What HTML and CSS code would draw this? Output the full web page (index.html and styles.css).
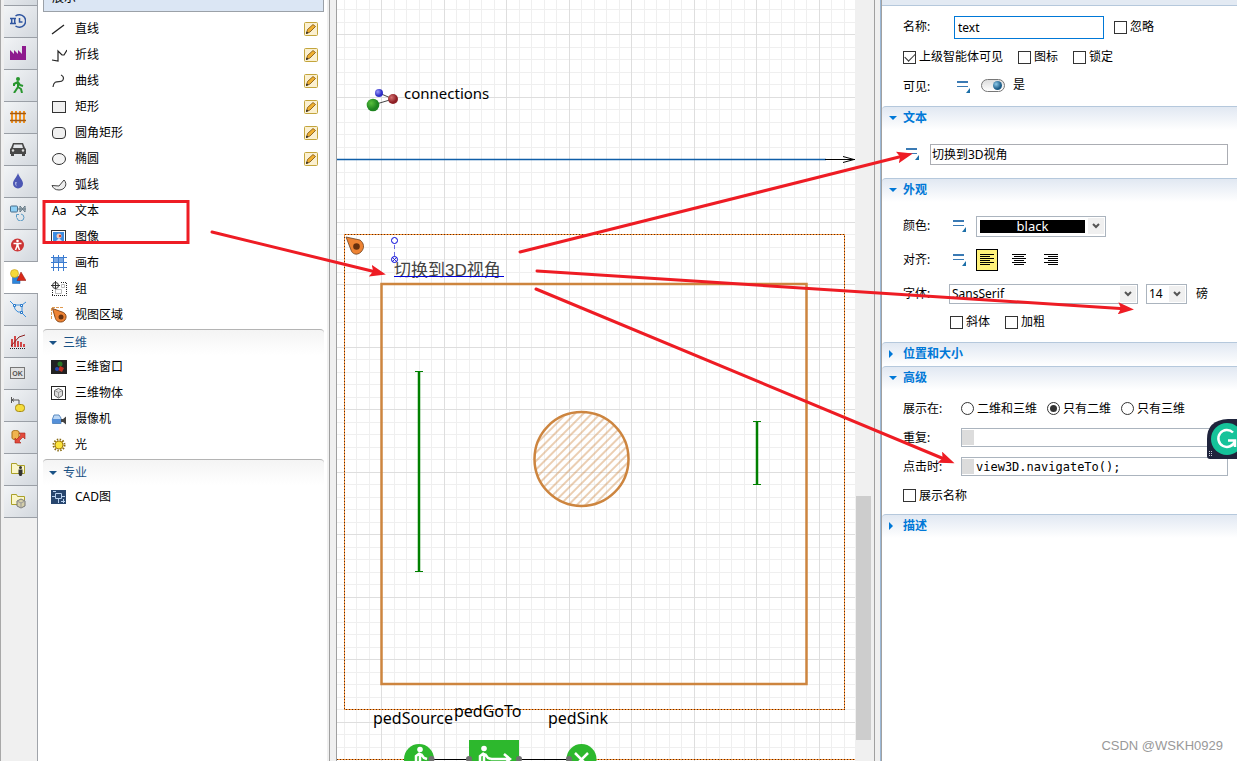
FILE: index.html
```html
<!DOCTYPE html>
<html lang="zh-CN">
<head>
    <meta charset="UTF-8">
    <meta name="viewport" content="width=device-width, initial-scale=1.0">
    <title>展示</title>
    <link rel="stylesheet" href="styles.css">
</head>
<body>
    <!-- Palette tabs -->
    <nav class="rail">
        <button type="button" class="tab tab-first" aria-label="智能体"></button>
        <button type="button" class="tab" aria-label="流程"><svg class="icon" viewBox="0 0 16 16"><g fill="none" stroke="#2f55a0" stroke-width="1.5"><path d="M5.500 3A6.300 6.300 0 1 1 5.500 13"/><path d="M0 5.500h6M0 10.500h6M1.700 5.500v5M4.700 5.500v5M9.500 5v4h3"/></g></svg></button>
        <button type="button" class="tab" aria-label="工业"><svg class="icon" viewBox="0 0 16 16"><path fill="#8e1b8e" d="M0 15V5l4 4V5l4 4V5l4 4V1h4v14z"/></svg></button>
        <button type="button" class="tab" aria-label="行人"><svg class="icon" viewBox="0 0 16 16"><circle cx="8" cy="2" r="2" fill="#28962e"/><path fill="none" stroke="#28962e" stroke-width="2" stroke-linejoin="round" d="M8 5v5l3 2 1 4M8 10l-2 3-2 3M4 9V7l4-2 2 3 3 1"/></svg></button>
        <button type="button" class="tab" aria-label="轨道"><svg class="icon" viewBox="0 0 16 16"><path stroke="#f0921e" stroke-width="2" d="M2 2v12M6 2v12M10 2v12M14 2v12"/><path stroke="#a35a12" stroke-width="1.5" d="M0 4.500h16M0 11.500h16"/></svg></button>
        <button type="button" class="tab" aria-label="道路"><svg class="icon" viewBox="0 0 16 16"><path fill="#484848" d="M3 2h10l2 5 1 1v5h-1v2h-3v-2H4v2H1v-2H0V8l1-1z"/><path fill="#e3e6ea" d="M4 3.500h8l1 3.500H3z"/><circle cx="3" cy="9.500" r="1.200" fill="#ddd"/><circle cx="13" cy="9.500" r="1.200" fill="#ddd"/></svg></button>
        <button type="button" class="tab" aria-label="流体"><svg class="icon" viewBox="0 0 16 16"><path fill="#4c57b4" d="M8 0c1 4 5 7 5 10.500a5 5 0 0 1-10 0C3 7 7 4 8 0z"/><path fill="#a9b0e2" d="M5 9c-.5 2 .5 4 2 4.500C6 12 6 10.500 7 9z"/></svg></button>
        <button type="button" class="tab" aria-label="系统动力学"><svg class="icon" viewBox="0 0 16 16"><rect x=".5" y="1" width="7" height="6" rx="1" fill="#8fd0f5" stroke="#4a6f8c"/><path fill="none" stroke="#5f7481" d="M7 4h9M10 1l5 6M15 1l-5 6M10 1v6M15 1v6"/><path fill="none" stroke="#5a9ac4" d="M9 9.500H6.500v3M11 9a3.500 3.500 0 1 1-4 4"/></svg></button>
        <button type="button" class="tab" aria-label="智能体"><svg class="icon" viewBox="0 0 16 16"><circle cx="7.500" cy="8" r="6.500" fill="#cc3535"/><circle cx="7.500" cy="4" r="1.300" fill="#fff"/><path fill="none" stroke="#fff" stroke-width="1.500" d="M3.500 6.500h8M7 6v3l-1.500 4M8 6v3l1.500 4"/></svg></button>
        <button type="button" class="tab active" aria-label="展示"><svg class="icon" viewBox="0 0 16 16"><path fill="#2c87dc" stroke="#1c5aa8" stroke-width=".5" d="M2.500 7.500H10v7H2.500z"/><circle cx="4.500" cy="4.500" r="4" fill="#f5d93a" stroke="#c79c17" stroke-width=".6"/><path fill="#d92818" stroke="#8c1810" stroke-width=".5" d="M11 3l5 8.500H7z"/></svg></button>
        <button type="button" class="tab" aria-label="空间标记"><svg class="icon" viewBox="0 0 16 16"><g fill="none" stroke="#3c8fdc"><path d="M0 0l4 4M16 1l-4 3M16 16l-5-5M4 4h8v7H8Q4 9 4 4"/></g><path fill="#fff" stroke="#2878c8" d="M3.500 3.500h2v2h-2zM10.500 3.500h2v2h-2zM10.500 10.500h2v2h-2z"/></svg></button>
        <button type="button" class="tab" aria-label="分析"><svg class="icon" viewBox="0 0 16 16"><path stroke="#d04848" stroke-width="2" d="M2 6v8M5 3v11M8 8v6M11 9v5M14 11v3"/><path fill="none" stroke="#8c2020" d="M1 13L9 4l6-2"/><path stroke="#222" stroke-dasharray="1 1" d="M0 15.500h15"/></svg></button>
        <button type="button" class="tab" aria-label="控件"><svg class="icon" viewBox="0 0 16 16"><rect x=".5" y="2.500" width="14" height="11" fill="#e2e2e2" stroke="#777"/><text x="7.500" y="11" class="ok-text">OK</text></svg></button>
        <button type="button" class="tab" aria-label="状态图"><svg class="icon" viewBox="0 0 16 16"><path fill="none" stroke="#555" d="M1.500 0v6M2 3h7v4M2 3l2-1.500M2 3l2 1.500"/><rect x="5.500" y="7.500" width="9" height="7" rx="3" fill="#f5dc3c" stroke="#a68b14"/></svg></button>
        <button type="button" class="tab" aria-label="行动图"><svg class="icon" viewBox="0 0 16 16"><path fill="#f0b450" stroke="#a56c14" d="M2 3c0-2 7-2 7 0v6c0 2-7 2-7 0z"/><path fill="#e34a3c" stroke="#a82418" stroke-width=".6" d="M15 4v6l-2-2-4 4 2 2H5V9l1.500 1.500L11 6 9 4z"/></svg></button>
        <button type="button" class="tab" aria-label="图片"><svg class="icon" viewBox="0 0 16 16"><path fill="#faf6c8" stroke="#aaa028" d="M1.500 2.500h5l1 2h7v8h-13z"/><circle cx="10.500" cy="6.500" r="1.500" fill="#333"/><path fill="#333" d="M8.500 8.500h4v4l-1 2.500h-2l-1-2.500z"/></svg></button>
        <button type="button" class="tab" aria-label="三维物体"><svg class="icon" viewBox="0 0 16 16"><path fill="#faf6c8" stroke="#aaa028" d="M1.500 1.500h5l1 2h7v8h-13z"/><path fill="#d4ceaa" stroke="#777" d="M11 6l4 2v5l-4 2-4-2V8z"/><path fill="none" stroke="#999" d="M7 8l4 2 4-2M11 10v5"/></svg></button>
    </nav>

    <!-- Palette -->
    <aside class="palette">
        <button type="button" class="palette-head"><span>展示</span><svg class="head-pins" viewBox="0 0 32 8"><path fill="#6b6459" d="M0 0h4v5H0zM6 0h4v5H6zM20 0h3v5h-3zM27 0h3v5h-3z"/></svg></button>
        <div class="items">
            <button type="button" class="item"><svg class="icon" viewBox="0 0 16 16"><path stroke="#222" stroke-width="1.300" d="M1 13L13 4"/></svg>直线<svg class="pencil"><use href="#pencil"/></svg></button>
            <button type="button" class="item"><svg class="icon" viewBox="0 0 16 16"><path fill="none" stroke="#222" stroke-width="1.200" d="M1 13l6 1V4l4 4h2l3-5"/></svg>折线<svg class="pencil"><use href="#pencil"/></svg></button>
            <button type="button" class="item"><svg class="icon" viewBox="0 0 16 16"><path fill="none" stroke="#333" stroke-width="1.200" d="M2 14c1-9 8-3 10-7 1-2 0-4-2-5"/></svg>曲线<svg class="pencil"><use href="#pencil"/></svg></button>
            <button type="button" class="item"><svg class="icon" viewBox="0 0 16 16"><rect x="1.500" y="2.500" width="13" height="11" fill="#f0f0f0" stroke="#333"/></svg>矩形<svg class="pencil"><use href="#pencil"/></svg></button>
            <button type="button" class="item"><svg class="icon" viewBox="0 0 16 16"><rect x="1.500" y="2.500" width="13" height="11" rx="3.500" fill="#f0f0f0" stroke="#333"/></svg>圆角矩形<svg class="pencil"><use href="#pencil"/></svg></button>
            <button type="button" class="item"><svg class="icon" viewBox="0 0 16 16"><ellipse cx="8" cy="8" rx="6.500" ry="5.500" fill="#f4f4f4" stroke="#333"/></svg>椭圆<svg class="pencil"><use href="#pencil"/></svg></button>
            <button type="button" class="item"><svg class="icon" viewBox="0 0 16 16"><path fill="#eee" stroke="#444" d="M1 8.500l7 .5 5-6c4 4 1 10-5 10-4 0-6-2-7-4.500z"/></svg>弧线</button>
            <button type="button" class="item"><svg class="icon" viewBox="0 0 16 16"><text x="1" y="12" class="aa-text">Aa</text></svg>文本</button>
            <button type="button" class="item"><svg class="icon" viewBox="0 0 16 16"><rect x=".5" y="1.500" width="14" height="12" fill="#fff" stroke="#333"/><path fill="#3c8ce0" d="M2 3h11v9H2z"/><circle cx="8" cy="7" r="2.500" fill="#f5c8b4"/><circle cx="9" cy="7" r="1.200" fill="#d04030"/><path fill="#cfe4fa" d="M5 12l3-3 3 3z"/></svg>图像</button>
            <button type="button" class="item"><svg class="icon" viewBox="0 0 16 16"><path fill="#79a8e4" d="M3 3h10v5H3z"/><path stroke="#3c7cd0" d="M0 2.500h16M0 7.500h16M0 12.500h16M2.500 0v16M7.500 0v16M12.500 0v16"/></svg>画布</button>
            <button type="button" class="item"><svg class="icon" viewBox="0 0 16 16"><path fill="none" stroke="#222" stroke-dasharray="1 1" d="M1 14.500h14.500V1.500H9M1.500 9v6"/><circle cx="4.500" cy="4.500" r="3" fill="none" stroke="#333"/><path fill="none" stroke="#333" d="M0 4.500h9M4.500 0v9"/><path fill="none" stroke="#bbb" d="M10.500 3.500h3v3h-3zM4.500 8.500h6v4h-6z"/></svg>组</button>
            <button type="button" class="item"><svg class="icon" viewBox="0 0 16 16"><path stroke="#e09a50" stroke-dasharray="3 1" fill="none" d="M12 .5H.5V13"/><path fill="#ee8333" stroke="#8a4a1a" d="M1.500 1.500l11 4c5 3 2 10-3 9.500-4 0-5-3-5.500-5z"/><circle cx="10" cy="10" r="2.500" fill="#66300e"/></svg>视图区域</button>
        </div>
        <button type="button" class="group-head"><i class="tri-down"></i>三维</button>
        <div class="items">
            <button type="button" class="item"><svg class="icon" viewBox="0 0 16 16"><path fill="#222" d="M0 1h16v14H0z"/><circle cx="9" cy="5" r="2.500" fill="#287828"/><path fill="#c03020" d="M9 7l4 2-2 4-4-2z"/><circle cx="6" cy="10" r="2" fill="#2848b0"/></svg>三维窗口</button>
            <button type="button" class="item"><svg class="icon" viewBox="0 0 16 16"><rect x=".5" y="1.500" width="14" height="13" fill="#fff" stroke="#222"/><path fill="#ddd" stroke="#666" d="M7.500 3.500l4 2v5l-4 2.500-4-2.500v-5z"/><path fill="none" stroke="#999" d="M3.500 5.500l4 2 4-2M7.500 7.500V13"/></svg>三维物体</button>
            <button type="button" class="item"><svg class="icon" viewBox="0 0 16 16"><path fill="#bcd7f5" stroke="#5b8bc0" d="M3 4h5l2 3v5.500H1.500q-1-4 1.500-8.500z"/><path fill="#5590d8" d="M1 8h9v4H1z"/><path fill="#444" d="M10 8h2l3-2.500v8L12 11h-2z"/></svg>摄像机</button>
            <button type="button" class="item"><svg class="icon" viewBox="0 0 16 16"><circle cx="8" cy="8" r="5.500" fill="none" stroke="#8a6c10" stroke-width="2" stroke-dasharray="1.440 1.440"/><circle cx="8" cy="8" r="4" fill="#fbe43c" stroke="#a37c10"/></svg>光</button>
        </div>
        <button type="button" class="group-head"><i class="tri-down"></i>专业</button>
        <div class="items">
            <button type="button" class="item"><svg class="icon" viewBox="0 0 16 16"><path fill="#28466e" d="M0 1h15v14H0z"/><path fill="none" stroke="#b8d0ee" d="M4.500 4.500h6v5h-6zM1 7.500h3M11 7.500h3M7.500 10v4M2 2.500h3M10 12.500h4M12.500 10v4"/></svg>CAD图</button>
        </div>
    </aside>

    <div class="splitter"></div>

    <!-- Graphical editor -->
    <main class="editor">
        <svg class="canvas">
            <defs>
                <pattern id="hatch" width="6" height="6" patternUnits="userSpaceOnUse" patternTransform="rotate(45)">
                    <path stroke="#cd853f" stroke-width=".8" d="M3 0v6"/>
                </pattern>
                <radialGradient id="redBall" cx=".35" cy=".35"><stop offset="0" stop-color="#d67070"/><stop offset="1" stop-color="#8e2026"/></radialGradient>
                <radialGradient id="greenBall" cx=".35" cy=".35"><stop offset="0" stop-color="#58c03c"/><stop offset="1" stop-color="#1e8420"/></radialGradient>
                <radialGradient id="blueBall" cx=".35" cy=".35"><stop offset="0" stop-color="#9a9af8"/><stop offset="1" stop-color="#3030c8"/></radialGradient>
                <symbol id="pencil" viewBox="0 0 14 14"><rect x=".5" y=".5" width="13" height="13" rx="1" fill="#fbf0d0" stroke="#c3a53c"/><path fill="#f0b030" stroke="#7a4f0c" stroke-width=".8" d="M2.500 11.500l1-4L9 2.500l2.500 2L6 10z"/><path fill="#222" d="M2 12l.5-2.500L4.500 11z"/></symbol>
                <symbol id="menu" viewBox="0 0 14 12"><path fill="#3a7ab4" d="M0 0h11v2H0zM0 5h11v1H0z"/><path fill="#1c6fa8" d="M13 7v5H9z"/></symbol>
            </defs>
            <g transform="translate(-337 0)">
                <g id="grid"></g>

                <path stroke="#0f5ea8" stroke-width="1.500" d="M337 159.500h489"/>
                <path fill="none" stroke="#000" d="M825 159.500h30M843 156.500l11 3-11 3"/>

                <path fill="none" stroke="#444" d="M379 93l14 6-20 6"/>
                <circle cx="373" cy="105" r="6.300" fill="url(#greenBall)"/>
                <circle cx="393" cy="99" r="5" fill="url(#redBall)"/>
                <circle cx="379" cy="93" r="4" fill="url(#blueBall)"/>
                <text x="404" y="99" class="canvas-text">connections</text>

                <path class="area-line" d="M344.500 234.500h500v475h-500zM337 759.500h518"/>
                <path class="area-dots" d="M344.500 234.500h500v475h-500zM337 759.500h518"/>
                <path fill="#ee8333" stroke="#6b4020" stroke-width=".8" d="M346 237l14 3c4 3 5 8 1 12s-9 2-10-2z"/>
                <circle cx="356.500" cy="246.500" r="3.300" fill="#66300e"/>

                <rect x="381.500" y="284" width="425" height="400" fill="none" stroke="#cd853f" stroke-width="2.500"/>
                <circle cx="581.500" cy="459" r="47" fill="url(#hatch)" stroke="#cd853f" stroke-width="2.500"/>
                <path stroke="#008000" stroke-width="2.500" d="M419 372v200M757 422v63"/>
                <path stroke="#008000" d="M415 371.500h8M415 571.500h8M753 421.500h8M753 484.500h8"/>

                <text x="394" y="276" class="label-text">切换到3D视角</text>
                <g fill="none" stroke="#0000d8">
                    <path d="M394 276.500h110"/>
                    <path stroke="#6868e0" stroke-dasharray="4 3" d="M394.500 245v11"/>
                    <circle cx="394.500" cy="259.500" r="3"/>
                    <path stroke-width=".8" d="M392.500 257.500l4 4M396.500 257.500l-4 4"/>
                    <circle cx="394.500" cy="240.500" r="3" fill="#fff"/>
                </g>

                <text x="373" y="724" class="block-text">pedSource</text>
                <text x="454" y="717" class="block-text">pedGoTo</text>
                <text x="548" y="724" class="block-text">pedSink</text>
                <path fill="#2db82d" d="M469 740h50v30h-50z"/>
                <circle cx="419" cy="759" r="15" fill="#2db82d"/>
                <circle cx="581.500" cy="759" r="15" fill="#2db82d"/>
                <path stroke="#000" d="M431 759.500h38M519 759.500h50"/>
                <g fill="none" stroke="#fff" stroke-width="2.500">
                    <path d="M420 753v9M420 753l-4 3v5M421 754l3 4 3 1"/>
                    <path d="M484 753v9M484 753l-4 3v5M485 754l3 4 3 1"/>
                    <path d="M491 759h18M504 754l6 5-6 5"/>
                    <path d="M575 753l13 13M588 753l-13 13"/>
                </g>
                <circle cx="420" cy="749.500" r="2.800" fill="#fff"/>
                <circle cx="484" cy="748.500" r="2.800" fill="#fff"/>
                <g fill="#707070"><circle cx="431.500" cy="759" r="3"/><circle cx="469" cy="759" r="3"/><circle cx="519" cy="759" r="3"/><circle cx="569" cy="759" r="3"/></g>
            </g>
        </svg>
        <div class="scrollbar"><div class="thumb"></div></div>
    </main>

    <div class="splitter splitter-right"></div>

    <!-- Properties -->
    <form class="props">
        <div class="props-top"></div>
        <div class="section section-name">
            <div class="row">
                <label class="name-label" for="name">名称:</label>
                <input type="text" id="name" class="name-input" value="text">
                <label class="check"><input type="checkbox">忽略</label>
            </div>
            <div class="row row-checks">
                <label class="check"><input type="checkbox" checked>上级智能体可见</label>
                <label class="check"><input type="checkbox">图标</label>
                <label class="check"><input type="checkbox">锁定</label>
            </div>
            <div class="row">
                <label class="visible-label" for="visible">可见:</label>
                <svg class="menu-icon"><use href="#menu"/></svg>
                <input type="checkbox" id="visible" class="switch" checked>
                <span>是</span>
            </div>
        </div>

        <button type="button" class="section-head"><i class="tri-down"></i>文本</button>
        <div class="section section-text">
            <div class="row">
                <svg class="menu-icon"><use href="#menu"/></svg>
                <input type="text" class="text-input" aria-label="文本" value="切换到3D视角">
            </div>
        </div>

        <button type="button" class="section-head"><i class="tri-down"></i>外观</button>
        <div class="section section-look">
            <div class="row row-tall">
                <label class="look-label" for="color">颜色:</label>
                <svg class="menu-icon"><use href="#menu"/></svg>
                <span class="select color-select"><select id="color"><option>black</option></select><svg class="chevron" viewBox="0 0 16 16"><path d="M5 6l3 3 3-3"/></svg></span>
            </div>
            <div class="row row-tall">
                <span class="look-label">对齐:</span>
                <svg class="menu-icon"><use href="#menu"/></svg>
                <span class="aligns">
                    <button type="button" class="align active" aria-label="左对齐"><svg viewBox="0 0 14 12"><path d="M0 .5h14M0 2.500h10M0 4.500h14M0 6.500h10M0 8.500h14M0 10.500h10"/></svg></button>
                    <button type="button" class="align" aria-label="居中"><svg viewBox="0 0 14 12"><path d="M0 .5h14M2 2.500h10M0 4.500h14M2 6.500h10M0 8.500h14M2 10.500h10"/></svg></button>
                    <button type="button" class="align" aria-label="右对齐"><svg viewBox="0 0 14 12"><path d="M0 .5h14M4 2.500h10M0 4.500h14M4 6.500h10M0 8.500h14M4 10.500h10"/></svg></button>
                </span>
            </div>
            <div class="row row-tall">
                <label class="font-label" for="font">字体:</label>
                <span class="select font-select"><select id="font"><option>SansSerif</option></select><svg class="chevron" viewBox="0 0 16 16"><path d="M5 6l3 3 3-3"/></svg></span>
                <span class="select size-select"><select id="size" aria-label="字号"><option>14</option></select><svg class="chevron" viewBox="0 0 16 16"><path d="M5 6l3 3 3-3"/></svg></span>
                <label for="size">磅</label>
            </div>
            <div class="row row-small">
                <label class="check"><input type="checkbox">斜体</label>
                <label class="check"><input type="checkbox">加粗</label>
            </div>
        </div>

        <button type="button" class="section-head"><i class="tri-right"></i>位置和大小</button>
        <button type="button" class="section-head"><i class="tri-down"></i>高级</button>
        <div class="section section-advanced">
            <div class="row row-radios">
                <span class="adv-label">展示在:</span>
                <label class="check"><input type="radio" name="show">二维和三维</label>
                <label class="check"><input type="radio" name="show" checked>只有二维</label>
                <label class="check"><input type="radio" name="show">只有三维</label>
            </div>
            <div class="row">
                <label class="adv-label" for="repeat">重复:</label>
                <span class="code"><input type="text" id="repeat"></span>
            </div>
            <div class="row">
                <label class="adv-label" for="click">点击时:</label>
                <span class="code"><input type="text" id="click" value="view3D.navigateTo();"></span>
            </div>
            <div class="row">
                <label class="check"><input type="checkbox">展示名称</label>
            </div>
        </div>
        <button type="button" class="section-head"><i class="tri-right"></i>描述</button>
    </form>

    <button type="button" class="assistant" aria-label="G">
        <svg viewBox="0 0 30 40"><path fill="#1f243c" d="M30 0H21Q0 1 0 20v17q0 3 3 3h27z"/><circle cx="20" cy="20" r="16" fill="#15c39a"/><path fill="none" stroke="#fff" stroke-width="2.500" d="M26 13.500A8.500 8.500 0 1 0 28 22"/><path fill="none" stroke="#fff" stroke-width="2.500" d="M21 21.500h7V28"/><path stroke="#c8ccd8" stroke-dasharray="1 1" d="M2.500 32v6M4.500 32v6"/></svg>
    </button>

    <!-- Callouts -->
    <svg class="callouts">
        <defs>
            <marker id="head" markerWidth="17" markerHeight="12" refX="10" refY="6" orient="auto" markerUnits="userSpaceOnUse">
                <path fill="#ee1c24" d="M0 0l16 6-16 6 3-6z"/>
            </marker>
        </defs>
        <rect x="44" y="201.500" width="144" height="41"/>
        <path marker-end="url(#head)" d="M212 232L380 273"/>
        <path marker-end="url(#head)" d="M520 252L907 155"/>
        <path marker-end="url(#head)" d="M537 271L1128 309"/>
        <path marker-end="url(#head)" d="M536 289L949 461"/>
    </svg>

    <div class="watermark">CSDN @WSKH0929</div>

    <script src="grid.js"></script>
</body>
</html>
```

FILE: styles.css
```css
* {
    box-sizing: border-box;
}

body {
    display: flex;
    height: 100vh;
    margin: 0;
    overflow: hidden;
    position: relative;
    background: #f0f0f0;
    color: #000;
    font-family: "Noto Sans", "Noto Sans CJK SC", sans-serif;
    font-size: 12px;
    line-height: 18px;
}

button, input, select {
    font: inherit;
    color: inherit;
    margin: 0;
    padding: 0;
    border: none;
    background: none;
}

svg {
    display: block;
    flex: none;
}

.icon {
    width: 16px;
    height: 16px;
}

/* tabs */
.rail {
    width: 38px;
    flex: none;
    padding-left: 3px;
    border-left: 1px solid #a8a8a8;
    border-right: 1px solid #a0a4aa;
}

.tab {
    display: flex;
    align-items: center;
    width: 33px;
    height: 32px;
    padding: 0 0 2px 6px;
    border-bottom: 1px solid #9a9fa6;
    background: linear-gradient(135deg, #f2f4f6, #d3d8de);
}

.tab-first {
    margin-top: -26px;
}

.tab.active {
    width: 34px;
    background: #fff;
}

.ok-text {
    font: bold 7px "Liberation Sans", sans-serif;
    text-anchor: middle;
    fill: #555;
}

/* palette */
.palette {
    width: 289px;
    flex: none;
    padding: 0 3px 0 5px;
    background: #fff;
}

.palette-head {
    display: flex;
    justify-content: space-between;
    align-items: center;
    width: 100%;
    height: 28px;
    margin-top: -16px;
    padding: 0 8px;
    border: 1px solid #9ba1a8;
    background: #dbe6f4;
}

.head-pins {
    width: 32px;
    height: 8px;
}

.items {
    display: flex;
    flex-direction: column;
}

.palette-head + .items {
    padding-top: 5px;
}

.item {
    display: flex;
    align-items: center;
    gap: 8px;
    height: 26px;
    padding: 0 6px 2px 8px;
    text-align: left;
}

.aa-text {
    font: 12px "Noto Sans", sans-serif;
}

.pencil {
    width: 14px;
    height: 14px;
    margin-left: auto;
}

.group-head {
    display: flex;
    align-items: center;
    gap: 6px;
    width: 100%;
    height: 26px;
    padding-left: 6px;
    border-top: 1px solid #b4b4b4;
    border-radius: 4px 4px 0 0;
    background: linear-gradient(#f4f4f4, #fff);
    color: #1a5286;
}

.tri-down {
    border: 4px solid transparent;
    border-top-color: currentColor;
    border-bottom: none;
}

.tri-right {
    margin-right: 4px;
    border: 4px solid transparent;
    border-left-color: currentColor;
    border-right: none;
}

.splitter {
    width: 10px;
    flex: none;
    padding-left: 2px;
}

.splitter::before {
    content: "";
    display: block;
    width: 6px;
    height: 100%;
    border: 1px solid #a0a0a0;
    border-width: 0 1px;
}

/* editor */
.editor {
    display: flex;
    flex: 1;
    min-width: 0;
}

.canvas {
    flex: 1;
    min-width: 0;
    height: 100%;
    background: #fff;
}

.canvas-text {
    font-size: 15px;
}

.block-text {
    font-size: 16px;
}

.label-text {
    font-family: "Liberation Sans", "Noto Sans CJK SC", sans-serif;
    font-size: 17px;
    fill: #444;
}

.area-line, .area-dots {
    fill: none;
    stroke: #f59038;
    shape-rendering: crispEdges;
}

.area-dots {
    stroke: #5a2c08;
    stroke-dasharray: 1 2;
}

.scrollbar {
    width: 17px;
    padding: 0 1px;
}

.thumb {
    width: 15px;
    height: 32vh;
    margin-top: 496px;
    background: #cdcdcd;
}

.splitter-right {
    width: 10px;
    border-right: 2px solid #9ab7d6;
}

/* properties */
.props {
    width: 355px;
    flex: none;
    background: #fff;
}

.props-top {
    height: 6px;
    border-bottom: 1px solid #b5c8dc;
    background: #e3eaf3;
}

.section {
    padding: 0 9px 0 21px;
}

.section-head {
    display: flex;
    align-items: center;
    gap: 6px;
    width: 100%;
    height: 24px;
    padding: 0 0 2px 7px;
    border-top: 1px solid #b5c8dc;
    border-radius: 4px 0 0 0;
    background: linear-gradient(#e1e8f2, #fff);
    color: #0078d7;
    font-weight: bold;
}

.row {
    display: flex;
    align-items: center;
    height: 30px;
}

.row-tall {
    height: 34px;
}

.row-small {
    height: 22px;
    gap: 15px;
    padding-left: 47px;
}

.row-checks {
    gap: 15px;
}

.section-name {
    padding-top: 6px;
    padding-bottom: 4px;
}

.section-text {
    padding-top: 9px;
    padding-bottom: 9px;
}

.section-look {
    padding-top: 7px;
    padding-bottom: 9px;
}

.section-advanced {
    padding-top: 4px;
    padding-bottom: 4px;
}

.section-advanced .row {
    height: 29px;
}

.row-radios {
    gap: 10px;
}

.row-radios .adv-label {
    margin-right: -10px;
}

.name-label {
    width: 51px;
}

.visible-label {
    width: 54px;
}

.look-label {
    width: 50px;
}

.font-label {
    width: 46px;
}

.adv-label {
    width: 58px;
}

.name-input {
    width: 150px;
    height: 23px;
    margin-right: 10px;
    padding: 0 3px;
    border: 1px solid #0078d7;
}

.text-input {
    flex: 1;
    height: 21px;
    margin-left: 10px;
    padding: 0 1px;
    border: 1px solid #abadb3;
}

.section-text .row {
    padding-left: 3px;
}

.menu-icon {
    width: 14px;
    height: 12px;
}

.check {
    display: flex;
    align-items: center;
    gap: 3px;
    white-space: nowrap;
}

.check input {
    appearance: none;
    display: flex;
    align-items: center;
    justify-content: center;
    width: 13px;
    height: 13px;
    border: 1px solid #333;
    background: #fff;
}

.check input[type="checkbox"]:checked::after {
    content: "";
    width: 9px;
    height: 5px;
    margin-bottom: 3px;
    border: 1px solid #333;
    border-width: 0 0 1px 1px;
    transform: rotate(-45deg);
}

.check input[type="radio"] {
    border-radius: 50%;
}

.check input[type="radio"]:checked::after {
    content: "";
    width: 7px;
    height: 7px;
    border-radius: 50%;
    background: #333;
}

.switch {
    appearance: none;
    display: flex;
    justify-content: flex-end;
    align-items: center;
    width: 24px;
    height: 13px;
    margin: 0 8px 4px 10px;
    padding-right: 2px;
    border: 1px solid #777;
    border-radius: 7px;
    background: linear-gradient(#ddd, #fff);
}

.switch::after {
    content: "";
    width: 9px;
    height: 9px;
    border-radius: 50%;
    background: radial-gradient(circle at 35% 35%, #8cc8e8, #1a5a86 60%);
}

.switch + span {
    margin-bottom: 4px;
}

.select {
    display: flex;
    align-items: center;
    height: 20px;
    border: 1px solid #abb4be;
    background: #fff;
}

.select select {
    appearance: none;
    flex: 1;
    min-width: 0;
    height: 18px;
    padding-left: 2px;
}

.chevron {
    width: 16px;
    height: 16px;
    margin-right: 1px;
    background: #f0f0f0;
    fill: none;
    stroke: #555;
    stroke-width: 2;
}

.color-select {
    width: 130px;
    height: 21px;
    margin-left: 9px;
}

.color-select select {
    height: 13px;
    margin: 0 3px;
    padding: 0;
    background: #000;
    color: #fff;
    font-size: 13px;
    line-height: 13px;
    text-align-last: center;
}

.font-select {
    width: 189px;
    margin-right: 8px;
}

.size-select {
    width: 41px;
    margin-right: 9px;
}

.aligns {
    display: flex;
    gap: 10px;
    margin-left: 9px;
}

.align {
    display: flex;
    align-items: center;
    justify-content: center;
    width: 22px;
    height: 22px;
}

.align svg {
    width: 14px;
    height: 12px;
    stroke: #000;
}

.align.active {
    border: 1px solid #000;
    background: #fff27a;
}

.code {
    display: flex;
    flex: 1;
    height: 19px;
    border: 1px solid #abb4be;
}

.code::before {
    content: "";
    width: 12px;
    margin: 1px 0;
    background: #dcdcdc;
}

.code input {
    flex: 1;
    min-width: 0;
    padding-left: 2px;
    font-family: "DejaVu Sans Mono", monospace;
}

.assistant {
    position: absolute;
    right: 0;
    top: 419px;
    width: 30px;
    height: 40px;
}

.callouts {
    position: absolute;
    top: 0;
    left: 0;
    width: 100%;
    height: 100%;
    pointer-events: none;
    fill: none;
    stroke: #ee1c24;
    stroke-width: 3;
    stroke-linecap: round;
}

.callouts marker {
    stroke: none;
}

.watermark {
    position: absolute;
    right: 14px;
    bottom: 6px;
    color: #999;
    font-family: "Liberation Sans", sans-serif;
    font-size: 13px;
}
```

FILE: grid.js
```js
const grid = document.getElementById('grid');
const step = 12.5;

function addLine(d, major) {
    const line = document.createElementNS('http://www.w3.org/2000/svg', 'path');
    line.setAttribute('d', d);
    line.setAttribute('stroke', major ? '#dedede' : '#efefef');
    grid.appendChild(line);
}

// minor lines first so the major ones stay on top
[false, true].forEach(major => {
    for (let i = 0; i < 200; i++) {
        if ((i % 5 === 3) === major) {
            addLine(`M${Math.floor(344 + i * step) + 0.5} 0v3000`, major);
        }
        if ((i % 5 === 2) === major) {
            addLine(`M337 ${Math.floor(9.5 + i * step) + 0.5}h3000`, major);
        }
    }
});
```
